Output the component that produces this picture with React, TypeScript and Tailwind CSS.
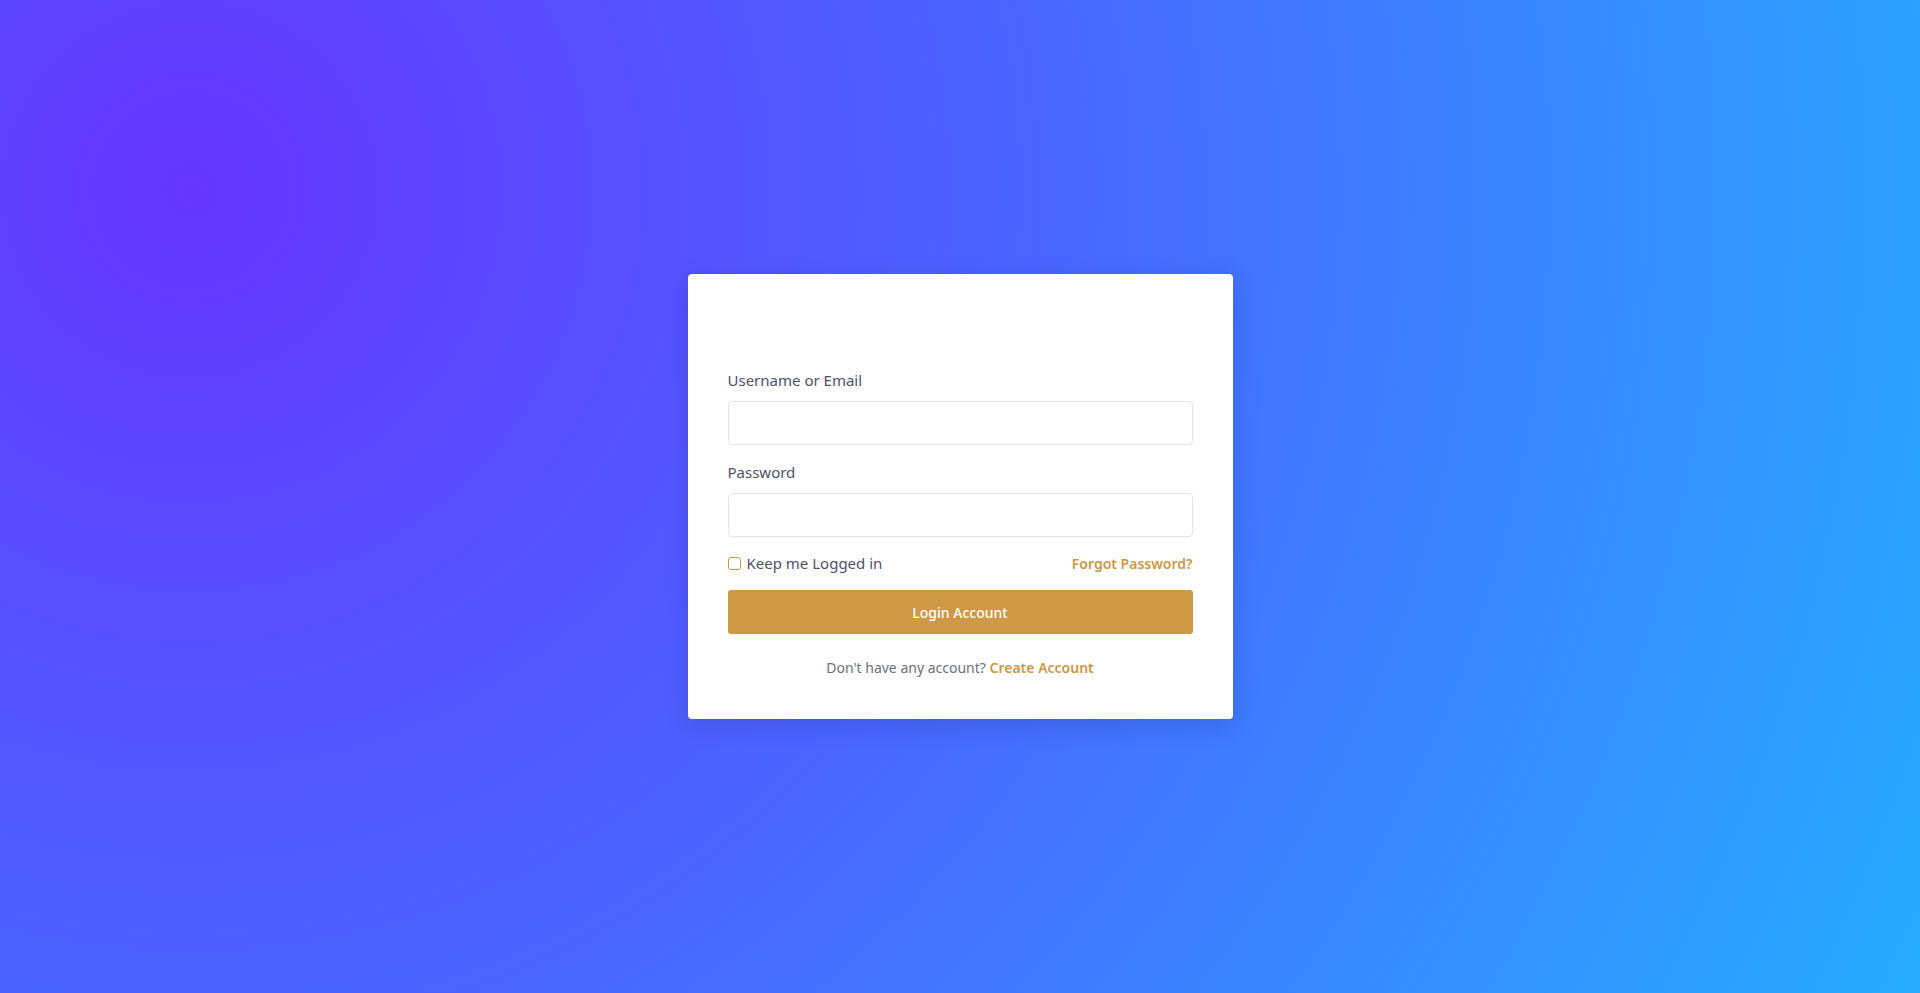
import { useState } from 'react'

const font = { fontFamily: '"Noto Sans", "Open Sans", sans-serif' }

function Field({ label, type }: { label: string; type: string }) {
  return (
    <div className="flex flex-col">
      <label className="mb-[10px] text-[15px] leading-[22px] text-[#4e526c]">{label}</label>
      <input
        type={type}
        className="h-[44px] w-full rounded-[4px] border border-[#e6e6ea] bg-white px-3 text-[15px] text-[#4e526c] outline-none"
      />
    </div>
  )
}

export default function App() {
  const [keep, setKeep] = useState(false)
  return (
    <div
      style={font}
      className="flex min-h-[993px] w-full items-center justify-center bg-[radial-gradient(circle_farthest-corner_at_190px_190px,#6536ff_0%,#4a66ff_45%,#26acff_100%)]"
    >
      <div className="w-[545px] rounded-[4px] bg-white px-[40px] pt-[40px] pb-[41px] shadow-[0_6px_24px_rgba(20,30,90,0.18)]">
        {/* logo slot, image missing in the original */}
        <div className="h-[55px]" />
        <div className="flex flex-col gap-4">
          <Field label="Username or Email" type="text" />
          <Field label="Password" type="password" />
        </div>
        <div className="mt-[14px] flex h-6 items-center justify-between">
          <label className="flex items-center gap-[6px] text-[15px] text-[#4e526c]">
            <input
              type="checkbox"
              checked={keep}
              onChange={(e) => setKeep(e.target.checked)}
              className="h-[13px] w-[13px] appearance-none rounded-[3px] border border-[#cd9745] bg-white checked:bg-[#cd9745]"
            />
            Keep me Logged in
          </label>
          <a href="#" className="text-[14px] font-semibold text-[#cd9745]">
            Forgot Password?
          </a>
        </div>
        <button className="mt-[15px] h-[44px] w-full rounded-[3px] bg-[#ce9845] text-[14px] font-medium text-white">
          Login Account
        </button>
        <p className="mt-6 text-center text-[14px] leading-5 text-[#6b6f80]">
          Don't have any account?{' '}
          <a href="#" className="font-semibold text-[#cd9745]">
            Create Account
          </a>
        </p>
      </div>
    </div>
  )
}
